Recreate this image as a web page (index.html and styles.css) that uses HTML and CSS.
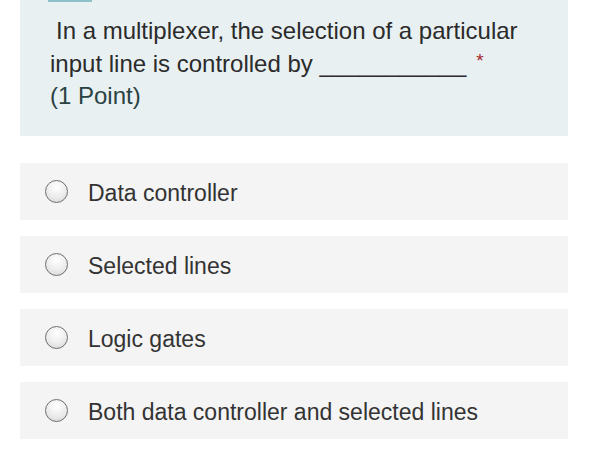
FILE: index.html
```html
<!DOCTYPE html>
<html>
<head>
<meta charset="utf-8">
<link rel="stylesheet" href="styles.css">
</head>
<body>
<div class="page">
  <div class="question">
    <div class="topbar"></div>
    <div class="qtext"><span class="lead">In a multiplexer, the selection of a particular<br>input line is controlled by ___________</span><span class="req">*</span><br><span class="points">(1 Point)</span></div>
  </div>
  <div class="options">
    <div class="option"><span class="radio"></span><span class="label">Data controller</span></div>
    <div class="option"><span class="radio"></span><span class="label">Selected lines</span></div>
    <div class="option"><span class="radio"></span><span class="label">Logic gates</span></div>
    <div class="option"><span class="radio"></span><span class="label">Both data controller and selected lines</span></div>
  </div>
</div>
</body>
</html>
```
FILE: styles.css
```css
html, body {
  margin: 0;
  padding: 0;
  background: #ffffff;
}
.page {
  padding-left: 20px;
  width: 548px;
  font-family: "Liberation Sans", Arial, sans-serif;
}
.question {
  background: #e9f0f2;
  height: 136px;
  box-sizing: border-box;
}
.topbar {
  margin-left: 28px;
  width: 44px;
  height: 2px;
  background: #8fc1c9;
}
.qtext {
  margin-top: 13px;
  padding-left: 30px;
  font-size: 24px;
  line-height: 32.5px;
  color: #2b2b2b;
  white-space: nowrap;
  text-indent: 6px;
}
.req {
  color: #a4262c;
  font-size: 19px;
  line-height: 0;
  vertical-align: 5px;
  margin-left: 10px;
}
.points {
  color: #2a4242;
}
.options {
  margin-top: 27px;
  display: flex;
  flex-direction: column;
  gap: 16px;
}
.option {
  background: #f4f4f4;
  height: 57px;
  display: flex;
  align-items: center;
  padding-left: 25px;
}
.radio {
  width: 21px;
  height: 21px;
  border: 1.8px solid #6e6e6e;
  border-radius: 50%;
  background: radial-gradient(circle at 50% 30%, #ffffff 0%, #ececec 55%, #d2d2d2 100%);
  flex: none;
}
.label {
  margin-left: 20px;
  padding-top: 3px;
  font-size: 23px;
  color: #333333;
}
```
